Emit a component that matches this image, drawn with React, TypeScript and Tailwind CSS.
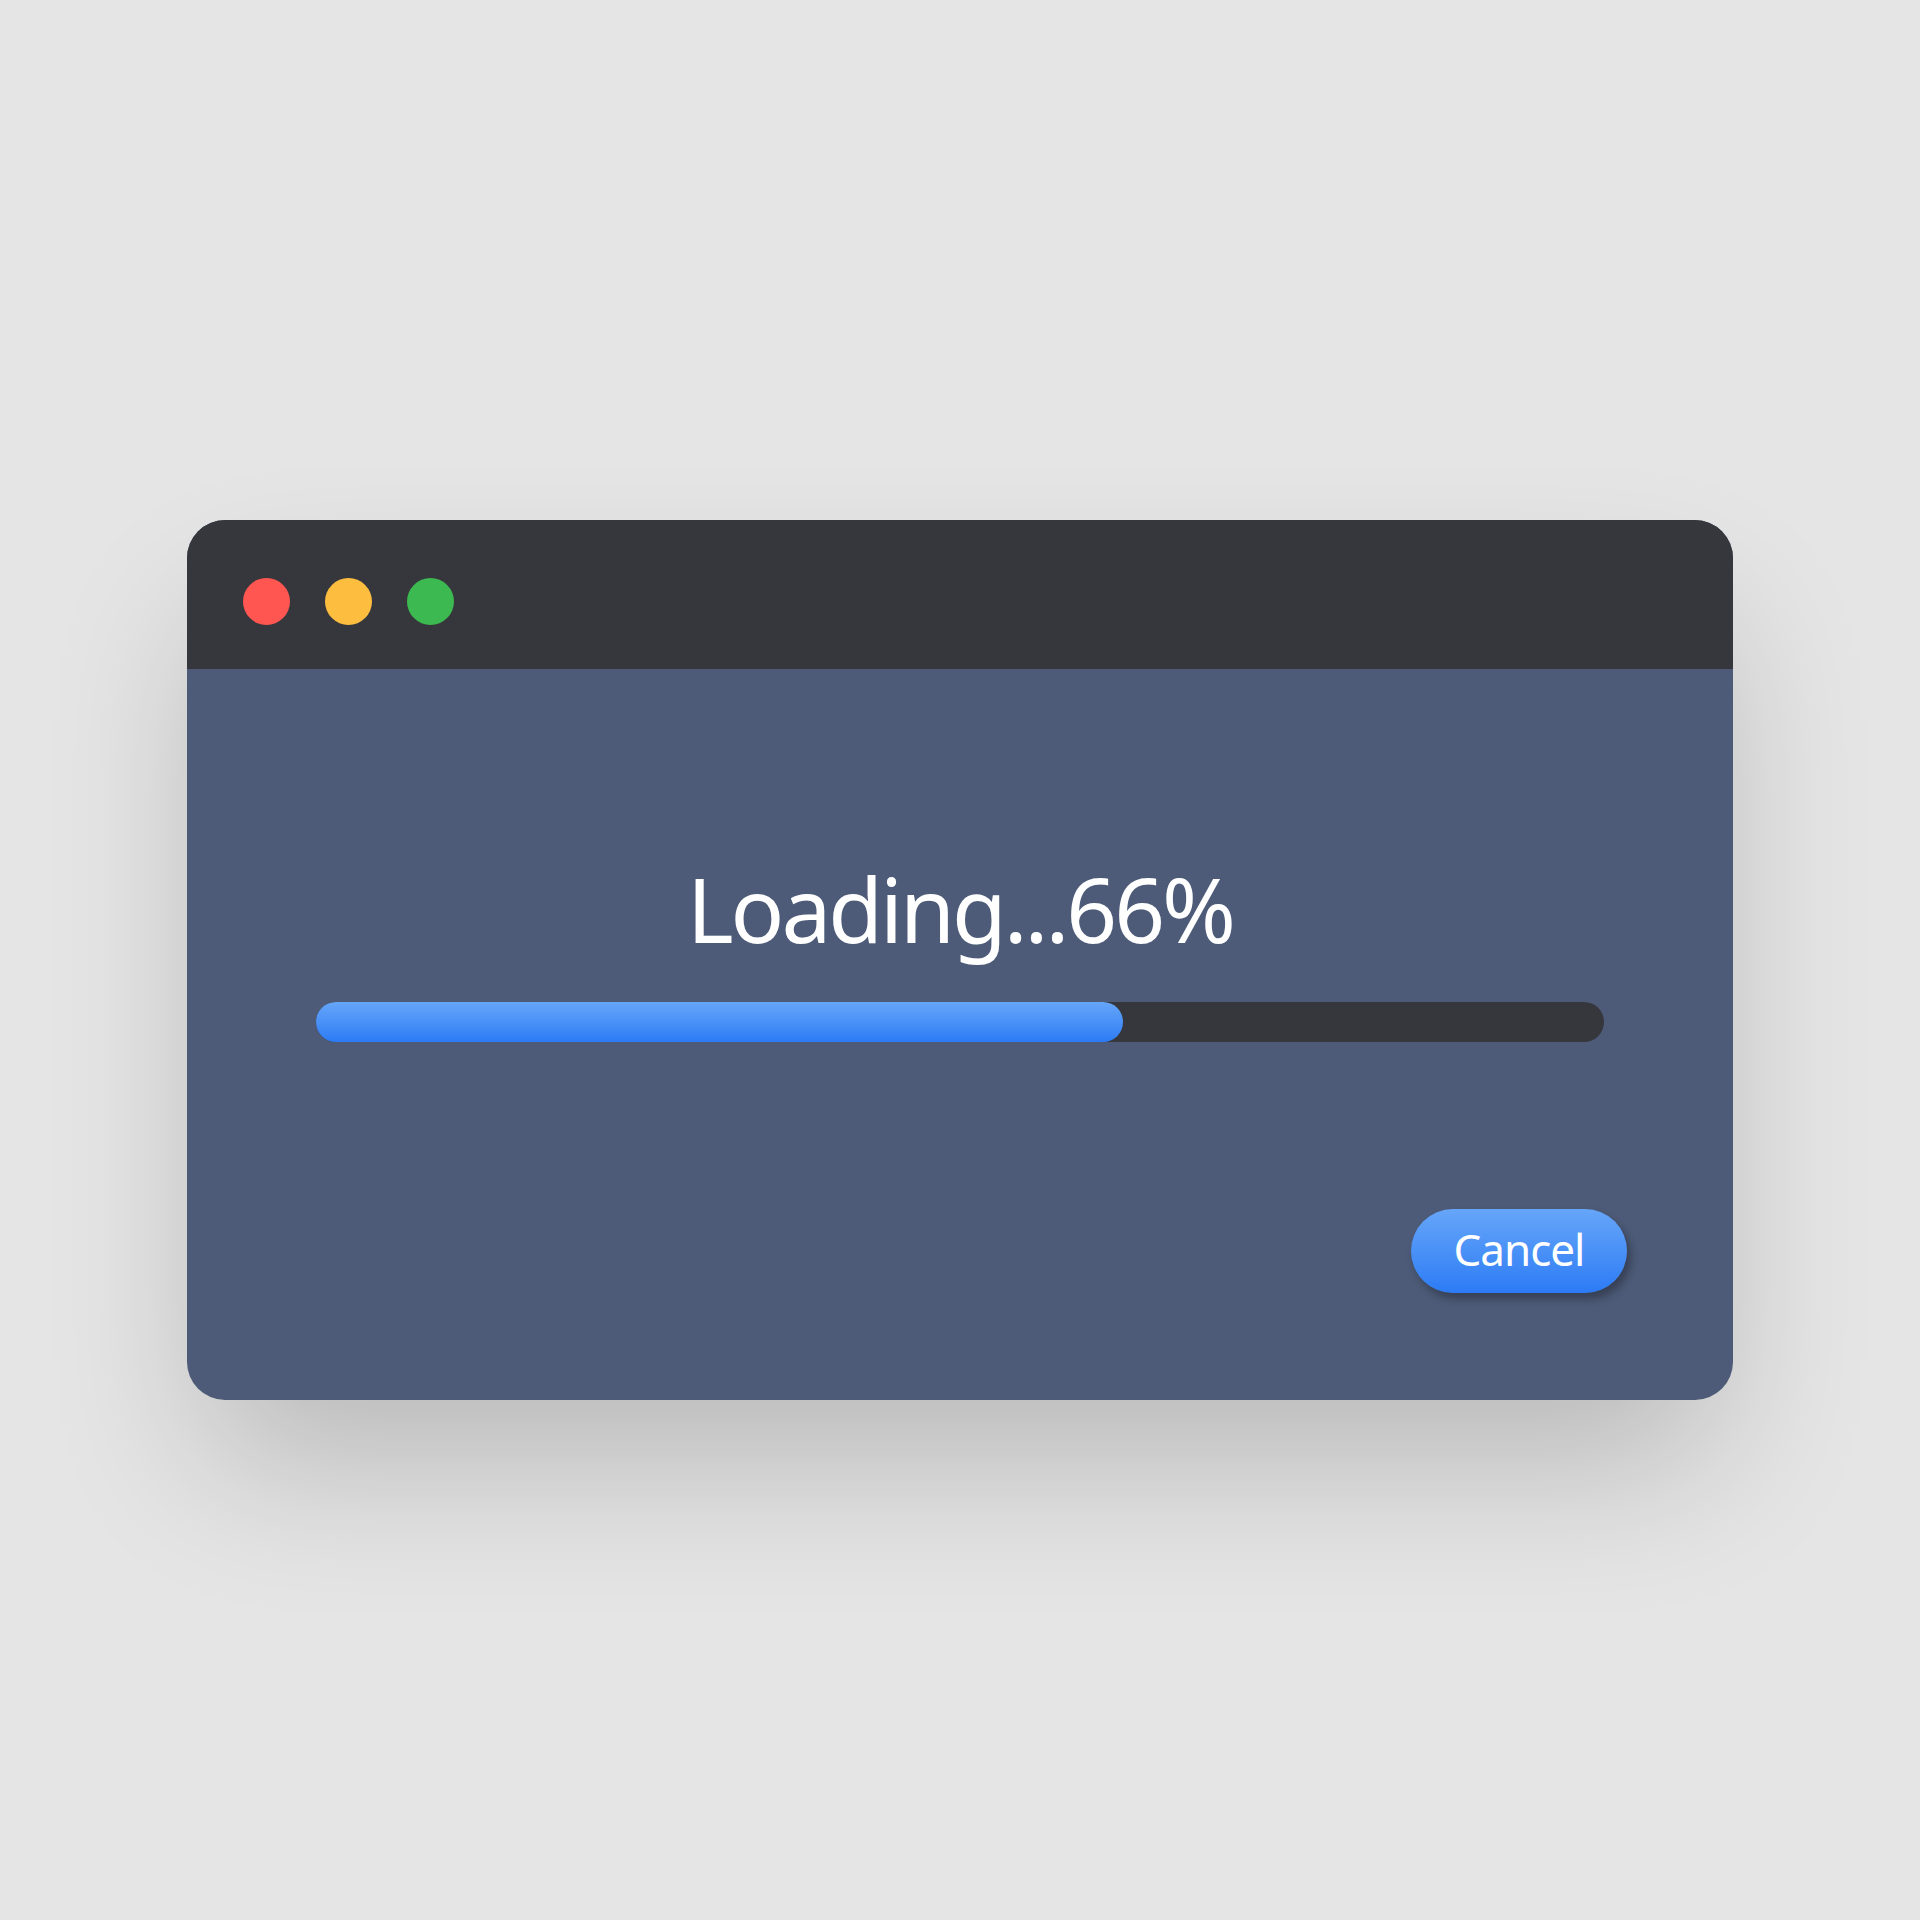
import React from 'react';

const dots = ['bg-[#ff5652]', 'bg-[#fdbe40]', 'bg-[#3cb950]'];

const TitleBar: React.FC = () => (
  <div className="flex h-[149px] shrink-0 items-start gap-[35px] bg-[#36373c] pl-[56px] pt-[58px]">
    {dots.map((c) => (
      <span key={c} className={`block h-[47px] w-[47px] rounded-full ${c}`} />
    ))}
  </div>
);

const ProgressBar: React.FC<{ fill: number }> = ({ fill }) => (
  <div className="mx-[23px] h-[40px] rounded-full bg-[#36373c]">
    <div
      className="h-full rounded-full bg-gradient-to-b from-[#66a6f9] to-[#2c7bf5]"
      style={{ width: `${fill}px` }}
    />
  </div>
);

export default function App() {
  return (
    <div
      className="flex h-[1920px] w-full items-center justify-center bg-[#e5e5e5]"
      style={{ fontFamily: '"Noto Sans", "Open Sans", sans-serif' }}
    >
      <div className="flex h-[880px] w-[1546px] flex-col overflow-hidden rounded-[38px] bg-[#4d5b78] shadow-[0_80px_160px_-20px_rgba(0,0,0,0.2)]">
        <TitleBar />
        <div className="flex flex-1 flex-col px-[106px]">
          <h1 className="mt-[195px] text-center text-[89px] leading-[89px] font-normal tracking-[-3px] text-white">
            Loading...66%
          </h1>
          <div className="mt-[49px]">
            <ProgressBar fill={807} />
          </div>
          <div className="mt-[167px] flex justify-end">
            <button className="flex h-[84px] w-[216px] items-center justify-center rounded-full bg-gradient-to-b from-[#66a6f9] to-[#2c7bf5] pb-[4px] text-[44px] tracking-[-1px] text-white shadow-[4px_6px_8px_rgba(0,0,0,0.3)]">
              Cancel
            </button>
          </div>
        </div>
      </div>
    </div>
  );
}
